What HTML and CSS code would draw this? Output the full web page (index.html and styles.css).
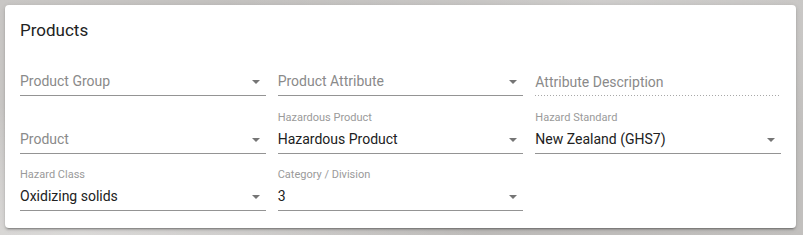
FILE: index.html
```html
<!DOCTYPE html>
<html lang="en">
<head>
  <meta charset="UTF-8">
  <meta name="viewport" content="width=device-width, initial-scale=1.0">
  <title>Products</title>
  <link rel="stylesheet" href="styles.css">
</head>
<body>
  <div class="card">
    <h2 class="card-title">Products</h2>
    <div class="fields">
      <div class="field">
        <div class="field-label"></div>
        <div class="control">
          <span class="placeholder">Product Group</span>
          <span class="arrow"></span>
        </div>
      </div>
      <div class="field">
        <div class="field-label"></div>
        <div class="control">
          <span class="placeholder">Product Attribute</span>
          <span class="arrow"></span>
        </div>
      </div>
      <div class="field">
        <div class="field-label"></div>
        <div class="control disabled">
          <span class="placeholder">Attribute Description</span>
        </div>
      </div>

      <div class="field">
        <div class="field-label"></div>
        <div class="control">
          <span class="placeholder">Product</span>
          <span class="arrow"></span>
        </div>
      </div>
      <div class="field">
        <div class="field-label">Hazardous Product</div>
        <div class="control">
          <span class="value">Hazardous Product</span>
          <span class="arrow"></span>
        </div>
      </div>
      <div class="field">
        <div class="field-label">Hazard Standard</div>
        <div class="control">
          <span class="value">New Zealand (GHS7)</span>
          <span class="arrow"></span>
        </div>
      </div>

      <div class="field">
        <div class="field-label">Hazard Class</div>
        <div class="control">
          <span class="value">Oxidizing solids</span>
          <span class="arrow"></span>
        </div>
      </div>
      <div class="field">
        <div class="field-label">Category / Division</div>
        <div class="control">
          <span class="value">3</span>
          <span class="arrow"></span>
        </div>
      </div>
    </div>
  </div>
</body>
</html>
```

FILE: styles.css
```css
* {
  margin: 0;
  padding: 0;
  box-sizing: border-box;
  font-family: Roboto, "Liberation Sans", Arial, sans-serif;
}
html, body {
  height: 100%;
}
body {
  padding: 5px 7px 7px 5px;
  background-color: #c3c1bf;
  background-image:
    radial-gradient(ellipse at 10% 100%, rgba(255, 255, 255, 0.35), transparent 40%),
    radial-gradient(ellipse at 75% 0%, rgba(255, 255, 255, 0.25), transparent 45%),
    linear-gradient(90deg, #c9c7c5, #bdbbb9 60%, #c2c0be);
}
.card {
  background-color: #fff;
  border-radius: 4px;
  padding: 15px 15px 17px 15px;
  box-shadow: 0 3px 1px -2px rgba(0, 0, 0, 0.2), 0 2px 2px 0 rgba(0, 0, 0, 0.14), 0 1px 5px 0 rgba(0, 0, 0, 0.12);
}
.card-title {
  font-size: 17px;
  font-weight: 400;
  line-height: 20px;
  color: #222;
  margin-bottom: 11px;
}
.fields {
  display: grid;
  grid-template-columns: repeat(3, 1fr);
  column-gap: 12px;
  row-gap: 12.5px;
}
.field {
  display: flex;
  flex-direction: column;
  height: 45px;
}
.field-label {
  font-size: 11px;
  line-height: 13px;
  height: 13px;
  margin-top: 2px;
  color: #9a9a9a;
}
.control {
  display: flex;
  align-items: flex-end;
  height: 30px;
  padding-bottom: 4px;
  border-bottom: 1px solid #949494;
}
.control.disabled {
  border-bottom: none;
  background-image: repeating-linear-gradient(to right, #a8a8a8 0, #a8a8a8 1px, transparent 1px, transparent 3px);
  background-size: 100% 1px;
  background-repeat: no-repeat;
  background-position: left bottom;
}
.placeholder {
  flex: 1;
  font-size: 14px;
  line-height: 20px;
  color: #8a8a8a;
}
.value {
  flex: 1;
  font-size: 14px;
  line-height: 20px;
  color: #212121;
}
.arrow {
  width: 0;
  height: 0;
  margin: 0 6px 7px 0;
  border-left: 4px solid transparent;
  border-right: 4px solid transparent;
  border-top: 4px solid #757575;
}
```
